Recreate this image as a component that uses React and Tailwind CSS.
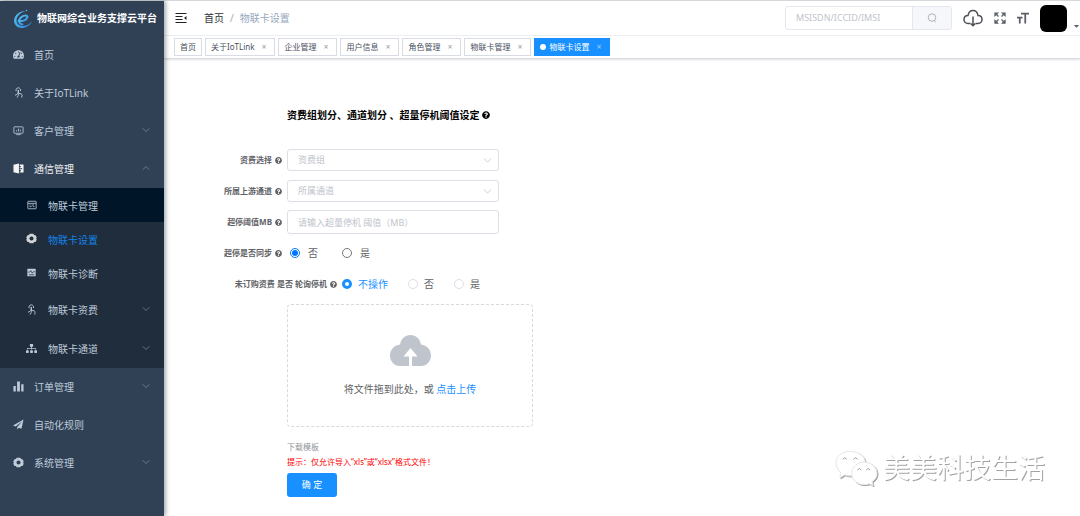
import { useState } from 'react';
import { FaTachometerAlt, FaSitemap, FaQuestionCircle, FaCaretDown } from 'react-icons/fa';
import { ChevronDown, ChevronUp } from 'lucide-react';

const icons = {
  dashboard: <FaTachometerAlt className="w-[11px] h-[11px]" />,
  touch: (
    <svg className="w-[11px] h-[11px]" viewBox="0 0 24 24" fill="none" stroke="currentColor" strokeWidth="2">
      <path d="M7 9a5 5 0 1 1 9 0" />
      <path d="M11.500 18V6.500v7l6 1.500c2 .6 2.500 1.500 2.200 3.500L19 23" />
      <path d="M11.500 12c-1 3-4 5-7 6M9 23l2.500-5" />
    </svg>
  ),
  monitor: (
    <svg className="w-[11px] h-[11px]" viewBox="0 0 24 24" fill="none" stroke="currentColor" strokeWidth="1.800">
      <rect x="2" y="4" width="20" height="14" rx="1" />
      <path d="M7 21h10M8 14v-3M12 14V8M16 14v-4" />
    </svg>
  ),
  door: (
    <svg className="w-[11px] h-[11px]" viewBox="0 0 24 24" fill="currentColor">
      <path d="M1 4l12-3v22L1 20z" />
      <path d="M14.500 3.500H23v17h-8.500v-2H17v-3h-2.500v-2H20v-2h-5.500v-2H17v-3h-2.500z" />
    </svg>
  ),
  list: (
    <svg className="w-[10px] h-[10px]" viewBox="0 0 24 24" fill="none" stroke="currentColor" strokeWidth="2">
      <rect x="2" y="3" width="20" height="18" rx="1" />
      <path d="M2 8h20M6 12h3M11 12h6M6 16h5M14 16h4" />
    </svg>
  ),
  gear: (
    <svg className="w-[11px] h-[11px]" viewBox="0 0 24 24" fill="currentColor" fillRule="evenodd">
      <path d="M8 1.500h8l1.500 3 3.200.5 2.800 5-1.500 2 1.500 2.500-2.800 5-3.200.3-1.500 2.700H8l-1.500-2.700-3.200-.3-2.800-5L2 12 .5 10l2.800-5 3.200-.5zM12 7.500a4.500 4.500 0 1 0 0 9 4.500 4.500 0 0 0 0-9z" />
    </svg>
  ),
  diagnose: (
    <svg className="w-[9px] h-[9px]" viewBox="0 0 24 24">
      <rect x="1" y="2" width="22" height="20" rx="1" fill="currentColor" />
      <path d="M3 11h4l3-4 4 7 3-4h4M5 18h14" fill="none" stroke="#1f2d3d" strokeWidth="2" />
    </svg>
  ),
  tree: <FaSitemap className="w-[11px] h-[11px]" />,
  chart: (
    <svg className="w-[11px] h-[11px]" viewBox="0 0 24 24" fill="currentColor">
      <path d="M1 11h5v12H1zM9 1h6v22H9zM18 7h5v16h-5z" />
    </svg>
  ),
  plane: (
    <svg className="w-[11px] h-[11px]" viewBox="0 0 24 24" fill="currentColor">
      <path d="M23 1L0 14l6 2.500L20 5 9 18v5l3.500-4 6 2.500z" />
    </svg>
  ),
};

const menu = [
  { label: '首页', icon: 'dashboard' },
  { label: '关于IoTLink', icon: 'touch' },
  { label: '客户管理', icon: 'monitor', arrow: 'down' },
  {
    label: '通信管理',
    icon: 'door',
    arrow: 'up',
    children: [
      { label: '物联卡管理', icon: 'list', hover: true },
      { label: '物联卡设置', icon: 'gear', active: true },
      { label: '物联卡诊断', icon: 'diagnose' },
      { label: '物联卡资费', icon: 'touch', arrow: 'down' },
      { label: '物联卡通道', icon: 'tree', arrow: 'down' },
    ],
  },
  { label: '订单管理', icon: 'chart', arrow: 'down' },
  { label: '自动化规则', icon: 'plane' },
  { label: '系统管理', icon: 'gear', arrow: 'down' },
];

const tabs = ['首页', '关于IoTLink', '企业管理', '用户信息', '角色管理', '物联卡管理', '物联卡设置'];

function MenuItem({ item, sub = false }) {
  const height = !sub ? 'h-[38px]' : item.arrow ? 'h-[39px]' : 'h-[34px]';
  const color = item.active ? 'text-[#1682e6]' : item.children ? 'text-[#f4f4f5]' : 'text-[#bfcbd9]';
  return (
    <a
      href="#"
      className={`flex items-center pr-3 text-[10px] ${height} ${color} ${sub ? 'pl-[26px] pt-[2px]' : 'pl-[13px] pt-px'} ${
        item.hover ? 'bg-[#001528]' : ''
      }`}
    >
      <span className={`flex w-[11px] justify-center pb-[3px] ${item.active ? 'text-[#d0d3d6]' : ''}`} aria-hidden="true">
        {icons[item.icon]}
      </span>
      <span className={sub ? 'ml-[11px] flex-1' : 'ml-[10px] flex-1'}>{item.label}</span>
      {item.arrow === 'down' && <ChevronDown className="w-3 h-3 mb-1 text-[#7f8b9a]" strokeWidth={1.5} />}
      {item.arrow === 'up' && <ChevronUp className="w-3 h-3 mb-1 text-[#7f8b9a]" strokeWidth={1.5} />}
    </a>
  );
}

function Sidebar() {
  return (
    <aside className="relative z-10 w-[164px] shrink-0 bg-[#304156] shadow-[2px_0_4px_rgba(0,21,41,0.35)]">
      <h1 className="m-0 flex h-[35px] items-center gap-1 whitespace-nowrap pl-[13px] text-[10px] font-bold text-white">
        <svg className="w-5 h-5 shrink-0" viewBox="0 0 40 40" fill="none" strokeLinecap="round" aria-hidden="true">
          <defs>
            <linearGradient id="logo" x1="0" y1="0" x2="1" y2="1">
              <stop offset="0" stopColor="#59c6f5" />
              <stop offset="1" stopColor="#2b86dc" />
            </linearGradient>
          </defs>
          <path
            d="M25 4C13 4 3 12 2 23c0 9 7 15 15 15 9 0 17-5 21-13-6 6-12 9-18 9-8 0-13-5-13-11C7 14 15 7 25 4z"
            fill="url(#logo)"
          />
          <path d="M11 24c8 1 17-2 18-8 0-4-7-4-12 0-7 5-6 14 2 15" stroke="url(#logo)" strokeWidth="4" />
          <circle cx="27" cy="3" r="1.500" fill="#59c6f5" />
        </svg>
        物联网综合业务支撑云平台
      </h1>
      <nav>
        {menu.map((item) => (
          <div key={item.label}>
            <MenuItem item={item} />
            {item.children && (
              <div className="bg-[#1f2d3d]">
                {item.children.map((child) => (
                  <MenuItem key={child.label} item={child} sub />
                ))}
              </div>
            )}
          </div>
        ))}
      </nav>
    </aside>
  );
}

function Navbar() {
  return (
    <header className="flex h-[35px] items-center border-b border-[#eff0f2] pl-[11px] text-[10px]">
      <button type="button" aria-label="折叠菜单" className="text-[#222]">
        <svg className="w-3 h-3" viewBox="0 0 24 24" fill="none" stroke="currentColor" strokeWidth="2.400">
          <path d="M1 3h22M1 9h14M1 15h14M1 21h22" />
          <path d="M23 8v8l-5-4z" fill="currentColor" stroke="none" />
        </svg>
      </button>
      <div className="ml-[17px] flex flex-1 gap-[6px]">
        <a href="#" className="text-[#303133]">首页</a>
        <span className="text-[#a8abb2]">/</span>
        <span className="text-[#97a8be]">物联卡设置</span>
      </div>
      <form className="flex h-6 w-[167px] overflow-hidden rounded-[3px] border border-[#e4e7ed]">
        <input
          type="text"
          aria-label="搜索"
          placeholder="MSISDN/ICCID/IMSI"
          className="min-w-0 flex-1 px-[10px] text-[9px] outline-none placeholder:text-[#c0c4cc]"
        />
        <button
          type="button"
          aria-label="搜索"
          className="flex w-[39px] items-center justify-center border-l border-[#e4e7ed] bg-[#f5f7fa] text-[#a0a4ab]"
        >
          <svg className="w-[10px] h-[10px]" viewBox="0 0 24 24" fill="none" stroke="currentColor" strokeWidth="2">
            <circle cx="12" cy="11" r="9" />
            <path d="M17 18l4 4" />
          </svg>
        </button>
      </form>
      <button type="button" aria-label="下载" className="ml-[11px] text-[#4b5058]">
        <svg className="w-5 h-[18px]" viewBox="0 0 40 36" fill="none" stroke="currentColor" strokeWidth="3">
          <path d="M15 29H10c-5 0-8-4-8-8 0-5 3-8 8-8C11 7 15 3 20 3s9 4 10 10c5 0 8 3 8 8 0 4-3 8-8 8h-5" />
          <path d="M20 15v18M15.500 29l4.500 4.500 4.500-4.500" />
        </svg>
      </button>
      <button type="button" aria-label="全屏" className="ml-[11px] text-[#5a5e66]">
        <svg className="w-3 h-3" viewBox="0 0 24 24" fill="currentColor" stroke="currentColor" strokeWidth="2.500">
          <path d="M2 2h5L2 7zM22 2h-5l5 5zM2 22h5l-5-5zM22 22h-5l5-5z" />
          <path d="M3 3l6 6M21 3l-6 6M3 21l6-6M21 21l-6-6" />
        </svg>
      </button>
      <button type="button" aria-label="字体大小" className="ml-[11px] text-[#5a5e66]">
        <svg className="w-3 h-3" viewBox="0 0 24 24" fill="none" stroke="currentColor" strokeWidth="3.500">
          <path d="M8 3h16M16.500 3v20M0 11h11M5.500 11v12" />
        </svg>
      </button>
      <button type="button" aria-label="用户" className="ml-[11px] flex items-end">
        <span className="h-[27px] w-[27px] rounded-[6px] bg-black" />
        <FaCaretDown className="ml-[6px] mb-[2px] h-2 w-[7px] text-[#5a5e66]" />
      </button>
    </header>
  );
}

function TabsBar() {
  return (
    <div className="flex h-[23px] items-center gap-[3px] border-b border-[#d8dce5] pl-[10px] text-[8px] shadow-[0_1px_2px_rgba(0,0,0,0.12)]">
      {tabs.map((tab, index) => {
        const active = index === tabs.length - 1;
        return (
          <div
            key={tab}
            className={`flex h-[18px] items-center whitespace-nowrap border px-[5px] ${
              active ? 'border-[#1890ff] bg-[#1890ff] text-white' : 'border-[#d8dce5] bg-white text-[#495060]'
            }`}
          >
            {active && <span className="mr-[3px] h-[6px] w-[6px] rounded-full bg-white" />}
            <a href="#">{tab}</a>
            {index > 0 && (
              <button type="button" aria-label={`关闭${tab}`} className="ml-1 w-[11px] text-center opacity-60">
                ×
              </button>
            )}
          </div>
        );
      })}
    </div>
  );
}

function FormRow({ label, id, wide = false, children }) {
  return (
    <div className="flex h-6 items-center gap-[5px]">
      <label
        htmlFor={id}
        className={`flex shrink-0 items-center justify-end gap-[3px] whitespace-nowrap text-[8px] font-bold text-[#606266] ${
          wide ? 'w-[173px]' : 'w-[118px]'
        }`}
      >
        {label}
        <FaQuestionCircle className="w-[7px] h-[7px]" />
      </label>
      {children}
    </div>
  );
}

function SelectBox({ id, placeholder }) {
  return (
    <div className="relative w-[212px]">
      <select
        id={id}
        className="block h-[22px] w-full appearance-none rounded-[3px] border border-[#dcdfe6] bg-white px-[10px] text-[9px] text-[#c0c4cc]"
      >
        <option>{placeholder}</option>
      </select>
      <ChevronDown className="pointer-events-none absolute right-[5px] top-[5px] h-[13px] w-[13px] text-[#c0c4cc]" strokeWidth={1.5} />
    </div>
  );
}

function Watermark() {
  return (
    <div className="pointer-events-none fixed right-[35px] bottom-[28px] flex items-center gap-[5px] text-[27px] leading-10 text-white [filter:drop-shadow(1px_1px_0_#a3a3a3)]">
      <svg className="w-[43px] h-[37px]" viewBox="0 0 44 37" fill="#fff" stroke="#e6e6e6" strokeWidth="1" aria-hidden="true">
        <path d="M15 1C7 1 1 6 1 13c0 4 2 7 5 10l-1 5 5-3c2 1 4 1 6 1 8 0 15-5 15-13S23 1 15 1z" />
        <path d="M30 12c-7 0-13 5-13 11.500S23 35 30 35c2 0 3 0 5-1l4 2-1-4c3-2 5-5 5-8.500C43 17 37 12 30 12z" />
        <g fill="none" stroke="#999">
          <path d="M8 9q2-3 4 0M19 9q2-3 4 0M23 20q2-3 4 0M32 20q2-3 4 0" />
        </g>
      </svg>
      <span>美美科技生活</span>
    </div>
  );
}

export default function App() {
  const [sync, setSync] = useState('否');
  const [poll, setPoll] = useState('不操作');

  return (
    <div className="flex min-h-screen border-t border-[#d5d7da] bg-white font-['Noto_Sans','Noto_Sans_CJK_SC',sans-serif] leading-normal">
      <Sidebar />
      <div className="min-w-0 flex-1">
        <Navbar />
        <TabsBar />
        <main className="pt-[48px]">
          <h2 className="m-0 flex items-center gap-[2px] pl-[123px] text-[10px] font-bold leading-4 text-black">
            资费组划分、通道划分 、超量停机阈值设定
            <FaQuestionCircle className="w-2 h-2" />
          </h2>

          <form className="mt-[25px]">
            <div className="flex flex-col gap-[7px]">
              <FormRow label="资费选择" id="package">
                <SelectBox id="package" placeholder="资费组" />
              </FormRow>
              <FormRow label="所属上游通道" id="channel">
                <SelectBox id="channel" placeholder="所属通道" />
              </FormRow>
              <FormRow label="超停阈值MB" id="threshold">
                <input
                  id="threshold"
                  type="text"
                  placeholder="请输入超量停机 阈值（MB）"
                  className="h-6 w-[212px] rounded-[3px] border border-[#dcdfe6] px-[10px] text-[9px] placeholder:text-[#c0c4cc]"
                />
              </FormRow>
              <FormRow label="超停是否同步" id="sync-0">
                <div className="flex gap-6 pl-[3px] text-[10px] text-[#606266]">
                  {['否', '是'].map((value, index) => (
                    <label key={value} className="flex items-center gap-2">
                      <input
                        id={`sync-${index}`}
                        type="radio"
                        name="sync"
                        className="m-0 h-[10px] w-[10px]"
                        checked={sync === value}
                        onChange={() => setSync(value)}
                      />
                      {value}
                    </label>
                  ))}
                </div>
              </FormRow>
              <FormRow label="未订购资费 是否 轮询停机" id="poll-0" wide>
                <div className="flex gap-5 text-[10px] text-[#606266]">
                  {['不操作', '否', '是'].map((value, index) => (
                    <label
                      key={value}
                      className={`flex items-center gap-[6px] ${poll === value ? 'text-[#1890ff]' : ''}`}
                    >
                      <input
                        id={`poll-${index}`}
                        type="radio"
                        name="poll"
                        className="m-0 h-[10px] w-[10px] appearance-none rounded-full border border-[#dcdfe6] bg-white checked:border-[3px] checked:border-[#1890ff]"
                        checked={poll === value}
                        onChange={() => setPoll(value)}
                      />
                      {value}
                    </label>
                  ))}
                </div>
              </FormRow>
            </div>

            <div className="mt-2 pl-[123px]">
              <div className="flex h-[123px] w-[246px] flex-col items-center rounded-[4px] border border-dashed border-[#d9d9d9] pt-[30px]">
                <svg className="w-[41px] h-[31px]" viewBox="0 0 41 31" aria-hidden="true">
                  <path d="M10 31C4 31 0 26 0 20.500S4 10 10 9.500C11 4 15 0 20.500 0S30 4 31 9.500C37 10 41 15 41 20.500S37 31 31 31z" fill="#c0c4cc" />
                  <path d="M20.500 13l7 8.500h-5.500V31h-3v-9.500h-5.500z" fill="#fff" />
                </svg>
                <p className="m-0 mt-4 text-[10px] text-[#606266]">
                  将文件拖到此处，或{' '}
                  <a href="#" className="text-[#1890ff]">点击上传</a>
                </p>
              </div>
              <a href="#" className="mt-[13px] block w-fit text-[8px] leading-[14px] text-[#909399]">下载模板</a>
              <p className="m-0 text-[8px] leading-4 text-[#ff0000]">提示：仅允许导入“xls”或“xlsx”格式文件！</p>
              <button type="button" className="mt-[3px] h-6 w-[50px] rounded-[3px] bg-[#1890ff] text-[9px] text-white">
                确 定
              </button>
            </div>
          </form>
        </main>
      </div>
      <Watermark />
    </div>
  );
}
